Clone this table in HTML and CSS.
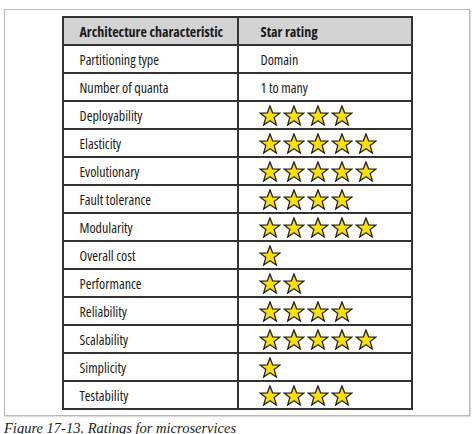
FILE: index.html
```html
<!DOCTYPE html>
<html>
<head>
<meta charset="utf-8">
<link rel="stylesheet" href="styles.css">
</head>
<body>
<svg width="0" height="0" class="defs">
  <defs>
    <symbol id="star" viewBox="0 0 22 21">
      <polygon points="11,1 13.6,7.8 21,8 15.2,12.6 17.3,20 11,15.8 4.7,20 6.8,12.6 1,8 8.4,7.8" fill="#ffe000" stroke="#222" stroke-width="1.3" stroke-linejoin="miter"/>
    </symbol>
  </defs>
</svg>
<div class="frame">
  <table class="ratings">
    <thead>
      <tr><th>Architecture characteristic</th><th>Star rating</th></tr>
    </thead>
    <tbody>
      <tr><td>Partitioning type</td><td>Domain</td></tr>
      <tr><td>Number of quanta</td><td>1 to many</td></tr>
      <tr><td>Deployability</td><td class="stars"><svg><use href="#star"/></svg><svg><use href="#star"/></svg><svg><use href="#star"/></svg><svg><use href="#star"/></svg></td></tr>
      <tr><td>Elasticity</td><td class="stars"><svg><use href="#star"/></svg><svg><use href="#star"/></svg><svg><use href="#star"/></svg><svg><use href="#star"/></svg><svg><use href="#star"/></svg></td></tr>
      <tr><td>Evolutionary</td><td class="stars"><svg><use href="#star"/></svg><svg><use href="#star"/></svg><svg><use href="#star"/></svg><svg><use href="#star"/></svg><svg><use href="#star"/></svg></td></tr>
      <tr><td>Fault tolerance</td><td class="stars"><svg><use href="#star"/></svg><svg><use href="#star"/></svg><svg><use href="#star"/></svg><svg><use href="#star"/></svg></td></tr>
      <tr><td>Modularity</td><td class="stars"><svg><use href="#star"/></svg><svg><use href="#star"/></svg><svg><use href="#star"/></svg><svg><use href="#star"/></svg><svg><use href="#star"/></svg></td></tr>
      <tr><td>Overall cost</td><td class="stars"><svg><use href="#star"/></svg></td></tr>
      <tr><td>Performance</td><td class="stars"><svg><use href="#star"/></svg><svg><use href="#star"/></svg></td></tr>
      <tr><td>Reliability</td><td class="stars"><svg><use href="#star"/></svg><svg><use href="#star"/></svg><svg><use href="#star"/></svg><svg><use href="#star"/></svg></td></tr>
      <tr><td>Scalability</td><td class="stars"><svg><use href="#star"/></svg><svg><use href="#star"/></svg><svg><use href="#star"/></svg><svg><use href="#star"/></svg><svg><use href="#star"/></svg></td></tr>
      <tr><td>Simplicity</td><td class="stars"><svg><use href="#star"/></svg></td></tr>
      <tr><td>Testability</td><td class="stars"><svg><use href="#star"/></svg><svg><use href="#star"/></svg><svg><use href="#star"/></svg><svg><use href="#star"/></svg></td></tr>
    </tbody>
  </table>
</div>
<p class="caption">Figure 17-13. Ratings for microservices</p>
</body>
</html>
```
FILE: styles.css
```css
html, body {
  margin: 0;
  padding: 0;
  background: #fff;
}
.defs {
  position: absolute;
  width: 0;
  height: 0;
}
.frame {
  margin: 9px 0 0 4px;
  width: 464px;
  height: 399px;
  border: 1px solid #b8b8b8;
  box-shadow: 1px 1px 1px #ddd;
  display: flex;
  justify-content: center;
  padding-top: 6px;
  box-sizing: content-box;
}
.ratings {
  border-collapse: collapse;
  border: 2px solid #333;
  font-family: "Open Sans", sans-serif;
  font-stretch: 75%;
  font-size: 14px;
  color: #1a1a1a;
  align-self: flex-start;
}
.ratings th,
.ratings td {
  border: 2px solid #333;
  height: 28px;
  padding: 0 0 0 16px;
  text-align: left;
  vertical-align: middle;
  box-sizing: border-box;
}
.ratings th:first-child,
.ratings td:first-child {
  width: 175px;
}
.ratings th:last-child,
.ratings td:last-child {
  width: 174px;
  padding-left: 22px;
}
.ratings th {
  background: #d3d3d3;
  font-weight: bold;
}
.ratings td.stars {
  padding-left: 20px;
  line-height: 0;
}
.stars svg {
  width: 22px;
  height: 21px;
  margin-right: 2px;
  vertical-align: middle;
}
.caption {
  margin: 4px 0 0 4px;
  font-family: "Liberation Serif", serif;
  font-style: italic;
  font-size: 14.5px;
  line-height: 16px;
  color: #222;
}
```
